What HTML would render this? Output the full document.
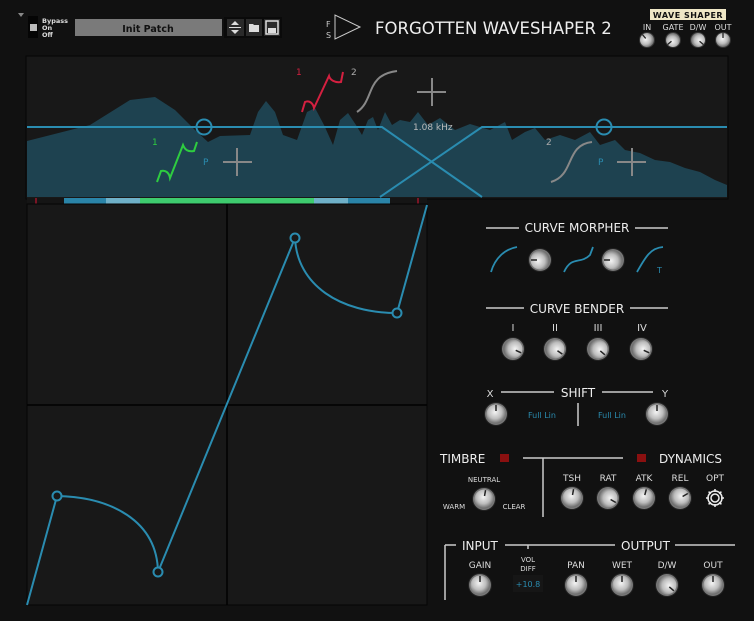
<!DOCTYPE html>
<html><head><meta charset="utf-8"><style>
html,body{margin:0;padding:0;background:#111;width:754px;height:621px;overflow:hidden}
svg{display:block}
text{font-family:"DejaVu Sans","Liberation Sans",sans-serif}
</style></head><body>
<svg width="754" height="621" viewBox="0 0 754 621" xmlns="http://www.w3.org/2000/svg">
<defs>
<radialGradient id="kg" cx="0.45" cy="0.4" r="0.6">
<stop offset="0" stop-color="#f4f4f4"/><stop offset="0.6" stop-color="#bdbdbd"/><stop offset="1" stop-color="#6a6a6a"/>
</radialGradient>
<g id="knob"><circle r="12" fill="#222"/><circle r="11" fill="#777"/><circle r="9.5" fill="url(#kg)"/><line x1="0" y1="-9" x2="0" y2="-3" stroke="#222" stroke-width="1.5"/></g>
<g id="sk"><circle r="8" fill="#333"/><circle r="7" fill="url(#kg)"/><line x1="0" y1="-7" x2="0" y2="-2" stroke="#222" stroke-width="1.3"/></g>
</defs>
<rect width="754" height="621" fill="#111"/>
<!-- header -->
<path d="M18 13 L24 13 L21 17Z" fill="#888"/>
<rect x="28" y="16" width="10" height="22" fill="#050505"/>
<rect x="30" y="24" width="7" height="7" fill="#bbb"/>
<text x="42" y="23" font-size="6.5" fill="#ddd" font-weight="bold">Bypass</text>
<text x="42" y="30" font-size="6.5" fill="#ddd" font-weight="bold">On</text>
<text x="42" y="37" font-size="6.5" fill="#ddd" font-weight="bold">Off</text>
<rect x="75" y="19" width="147" height="17" fill="#7a7a7a"/>
<text x="148" y="32" font-size="9.5" fill="#111" font-weight="bold" text-anchor="middle">Init Patch</text>
<rect x="224" y="17" width="58" height="21" fill="#0a0a0a"/>
<rect x="227" y="19" width="17" height="17" fill="#2a2a2a"/>
<path d="M231 25 L235 21 L239 25Z M231 30 L235 34 L239 30Z" fill="#ddd"/>
<rect x="229" y="27" width="12" height="1" fill="#ddd"/>
<rect x="246" y="19" width="16" height="17" fill="#2a2a2a"/>
<path d="M249 24 h4 l1 1 h5 v7 h-10Z" fill="#ddd"/>
<rect x="264" y="19" width="16" height="17" fill="#2a2a2a"/>
<rect x="266" y="21" width="12" height="13" fill="none" stroke="#ddd" stroke-width="1.5"/>
<rect x="268" y="28" width="8" height="5" fill="#ddd"/>
<text x="326" y="27" font-size="8" fill="#ccc">F</text>
<text x="326" y="38" font-size="8" fill="#ccc">S</text>
<path d="M335 15 L335 39 L360 27Z" fill="none" stroke="#ccc" stroke-width="1"/>
<text x="375" y="34" font-size="16.5" fill="#eee">FORGOTTEN WAVESHAPER 2</text>
<rect x="650" y="9" width="76" height="11" fill="#efe7c6"/>
<text x="688" y="18" font-size="8" fill="#111" font-weight="bold" text-anchor="middle" letter-spacing="0.5">WAVE SHAPER</text>
<g font-size="8" fill="#ddd" text-anchor="middle"><text x="647" y="30">IN</text><text x="673" y="30">GATE</text><text x="698" y="30">D/W</text><text x="723" y="30">OUT</text></g>
<use href="#sk" transform="translate(647,40) rotate(-40)"/><use href="#sk" transform="translate(673,40) rotate(-130)"/><use href="#sk" transform="translate(698,40) rotate(130)"/><use href="#sk" transform="translate(723,40)"/>
<!-- spectrum -->
<rect x="26" y="56" width="702" height="143" fill="#181818" stroke="#050505"/>
<path d="M27 141 L90 125 L130 100 L155 97 L175 110 L195 130 L208 142 L220 136 L250 135 L258 112 L266 101 L275 112 L283 135 L297 140 L307 112 L315 108 L324 125 L333 145 L340 120 L348 113 L356 125 L362 135 L368 120 L373 117 L378 130 L385 112 L392 125 L400 120 L410 122 L418 112 L428 125 L440 118 L455 130 L470 124 L490 130 L505 122 L512 140 L525 132 L535 128 L545 140 L560 135 L575 140 L590 132 L600 145 L615 140 L625 150 L640 153 L655 160 L670 162 L685 168 L700 172 L715 180 L727 185 L727 197 L27 197Z" fill="#1e4250"/>
<g stroke="#2a8cb0" stroke-width="2" fill="none">
<path d="M27 127 H382 L482 197"/>
<path d="M380 197 L482 127 H727"/>
<circle cx="204" cy="127" r="7.5" fill="none"/><circle cx="604" cy="127" r="7.5"/>
</g>
<g stroke="#888" stroke-width="2" fill="none">
<path d="M223 162 H252 M237 148 V176"/><path d="M417 92 H446 M432 78 V106"/><path d="M617 162 H646 M632 148 V176"/>
<path d="M357 112 C375 100 365 75 397 71"/><path d="M551 182 C575 175 565 145 592 142"/>
</g>
<path d="M157 182 L161 171 C165 170 169 172 170 178 L183 145 C185 150 188 152 194 151 L197 142" stroke="#2ecc40" stroke-width="2" fill="none"/>
<path d="M302 112 L305 102 C309 100 313 103 314 108 L329 76 C330 80 335 83 341 82 L343 72" stroke="#d42040" stroke-width="2" fill="none"/>
<text x="152" y="145" font-size="9" fill="#2ecc40">1</text>
<text x="296" y="75" font-size="9" fill="#d42040">1</text>
<text x="351" y="75" font-size="9" fill="#aaa">2</text>
<text x="546" y="145" font-size="9" fill="#aaa">2</text>
<text x="203" y="165" font-size="9" fill="#2a8cb0">P</text>
<text x="598" y="165" font-size="9" fill="#2a8cb0">P</text>
<text x="413" y="130" font-size="9" fill="#bbb">1.08 kHz</text>
<!-- band bar -->
<rect x="27" y="198" width="400" height="6" fill="#151515"/>
<rect x="35" y="198" width="2" height="6" fill="#7a1525"/><rect x="417" y="198" width="2" height="6" fill="#7a1525"/>
<rect x="64" y="198" width="42" height="6" fill="#2a84a8"/><rect x="106" y="198" width="34" height="6" fill="#6fb0c8"/>
<rect x="140" y="198" width="174" height="6" fill="#3ecb6e"/><rect x="314" y="198" width="34" height="6" fill="#6fb0c8"/>
<rect x="348" y="198" width="42" height="6" fill="#2a84a8"/>
<!-- graph -->
<rect x="27" y="204" width="400" height="401" fill="#181818" stroke="#050505"/>
<path d="M227 204 V605 M27 405 H427" stroke="#000" stroke-width="1.5"/>
<g stroke="#2a8cb0" stroke-width="2" fill="none">
<path d="M27 605 L57 496 C110 497 157 520 158 572 L295 238 C297 285 340 313 397 313 L427 205"/>
<circle cx="57" cy="496" r="4.5" fill="#181818"/><circle cx="158" cy="572" r="4.5" fill="#181818"/>
<circle cx="295" cy="238" r="4.5" fill="#181818"/><circle cx="397" cy="313" r="4.5" fill="#181818"/>
</g>
<!-- right panels -->
<g stroke="#ccc" stroke-width="1.5">
<path d="M486 228 H519 M635 228 H668 M486 308 H524 M630 308 H668 M501 392 H554 M602 392 H653"/>
<path d="M578 403 V426"/>
<path d="M523 458 H623 M543 458 V517"/>
<path d="M445 545 V600 M445 545 H456 M505 545 H615 M675 545 H735 M528 545 V549"/>
</g>
<g fill="#eee" font-size="12" text-anchor="middle">
<text x="577" y="232">CURVE MORPHER</text>
<text x="577" y="313">CURVE BENDER</text>
<text x="578" y="397">SHIFT</text>
</g>
<g fill="#eee" font-size="12">
<text x="440" y="463">TIMBRE</text><text x="659" y="463">DYNAMICS</text>
<text x="462" y="550">INPUT</text><text x="621" y="550">OUTPUT</text>
</g>
<g stroke="#2a8cb0" stroke-width="1.8" fill="none">
<path d="M491 272 C495 258 505 249 517 247"/>
<path d="M564 272 C572 255 580 265 590 255 L593 247"/>
<path d="M637 272 C645 258 650 248 663 247"/>
</g>
<text x="657" y="273" font-size="8" fill="#2a8cb0">T</text>
<use href="#knob" transform="translate(540,260) rotate(-90)"/><use href="#knob" transform="translate(613,260) rotate(-90)"/>
<g fill="#ddd" font-size="10" text-anchor="middle" font-family="Liberation Serif">
<text x="513" y="331">I</text><text x="555" y="331">II</text><text x="598" y="331">III</text><text x="642" y="331">IV</text>
</g>
<use href="#knob" transform="translate(513,349) rotate(115)"/><use href="#knob" transform="translate(555,349) rotate(125)"/><use href="#knob" transform="translate(598,349) rotate(130)"/><use href="#knob" transform="translate(641,349) rotate(115)"/>
<text x="490" y="397" font-size="10" fill="#ddd" text-anchor="middle">X</text>
<text x="665" y="397" font-size="10" fill="#ddd" text-anchor="middle">Y</text>
<use href="#knob" x="496" y="414"/><use href="#knob" x="657" y="414"/>
<text x="542" y="418" font-size="8" fill="#2a8cb0" text-anchor="middle">Full Lin</text>
<text x="612" y="418" font-size="8" fill="#2a8cb0" text-anchor="middle">Full Lin</text>
<rect x="500" y="454" width="9" height="8" fill="#8a1010"/><rect x="637" y="454" width="9" height="8" fill="#8a1010"/>
<g fill="#ddd" font-size="7" text-anchor="middle">
<text x="484" y="482">NEUTRAL</text><text x="454" y="509">WARM</text><text x="514" y="509">CLEAR</text>
<text x="528" y="562">VOL</text><text x="528" y="571">DIFF</text>
</g>
<use href="#knob" transform="translate(484,499) rotate(10)"/>
<g fill="#ddd" font-size="9" text-anchor="middle">
<text x="572" y="481">TSH</text><text x="608" y="481">RAT</text><text x="644" y="481">ATK</text><text x="680" y="481">REL</text><text x="715" y="481">OPT</text>
<text x="480" y="568">GAIN</text><text x="576" y="568">PAN</text><text x="622" y="568">WET</text><text x="667" y="568">D/W</text><text x="713" y="568">OUT</text>
</g>
<use href="#knob" transform="translate(572,498) rotate(10)"/><use href="#knob" transform="translate(608,498) rotate(120)"/><use href="#knob" transform="translate(644,498) rotate(15)"/><use href="#knob" transform="translate(680,498) rotate(60)"/>
<g transform="translate(715,498)" fill="none" stroke="#eee" stroke-width="1.5">
<circle r="4"/><path d="M0 -9 V-6 M0 6 V9 M-9 0 H-6 M6 0 H9 M-6.4 -6.4 L-4.2 -4.2 M4.2 4.2 L6.4 6.4 M-6.4 6.4 L-4.2 4.2 M4.2 -4.2 L6.4 -6.4"/><circle r="7"/>
</g>
<rect x="513" y="575" width="30" height="17" fill="#161616"/>
<text x="528" y="587" font-size="8" fill="#2a8cb0" text-anchor="middle">+10.8</text>
<use href="#knob" x="480" y="585"/><use href="#knob" x="576" y="585"/><use href="#knob" x="622" y="585"/><use href="#knob" transform="translate(667,585) rotate(130)"/><use href="#knob" x="713" y="585"/>
</svg>
</body></html>
